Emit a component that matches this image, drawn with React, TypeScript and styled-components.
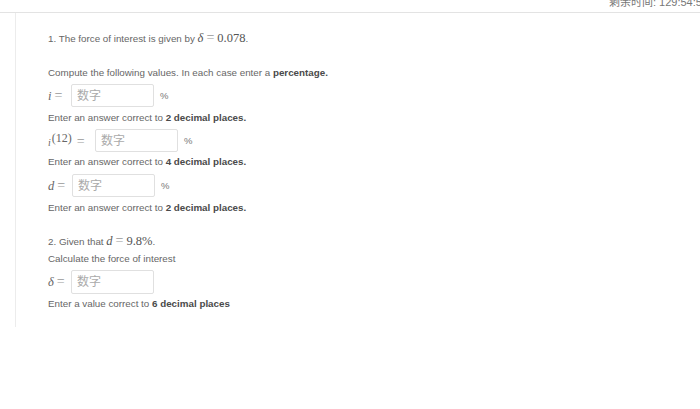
import React from "react";
import styled, { createGlobalStyle } from "styled-components";

const Global = createGlobalStyle`
  html, body { margin: 0; padding: 0; background: #fff; }
  body { font-family: "Liberation Sans", Arial, sans-serif; color: #666; }
`;

const Header = styled.div`
  height: 12px;
  border-bottom: 1px solid #e3e3e3;
  display: flex;
  justify-content: flex-end;
  overflow: hidden;
`;

const Timer = styled.div`
  font-size: 11px;
  line-height: 12px;
  margin-top: -4px;
  margin-right: -8px;
  color: #777;
  white-space: nowrap;
  font-family: "Liberation Sans", "Noto Sans CJK SC", sans-serif;
`;

const Body = styled.div`
  margin-left: 15px;
  border-left: 1px solid #ececec;
  padding: 18px 0 16px 32px;
  display: flex;
  flex-direction: column;
  align-items: flex-start;
`;

const Line = styled.div<{ $mt?: number }>`
  font-size: 9.8px;
  line-height: 14px;
  height: 14px;
  color: #666;
  white-space: nowrap;
  margin-top: ${(p) => p.$mt ?? 0}px;
  b { color: #4a4a4a; font-weight: bold; }
`;

const M = styled.span`
  font-family: "Liberation Serif", "Times New Roman", serif;
  font-size: 12.5px;
  color: #555;
`;

const V = styled.i`
  font-family: "Liberation Serif", "Times New Roman", serif;
  font-style: italic;
`;

const Eq = styled.span<{ $ml?: number }>`
  margin: 0 3px 0 ${(p) => p.$ml ?? 3}px;
  font-size: 14px;
  color: #999;
`;

const Row = styled.div<{ $mt?: number; $h?: number }>`
  display: flex;
  align-items: center;
  margin-top: ${(p) => p.$mt ?? 0}px;
  height: ${(p) => p.$h ?? 23}px;
`;

const Label = styled.span<{ $w: number }>`
  font-family: "Liberation Serif", "Times New Roman", serif;
  font-size: 12.5px;
  color: #666;
  width: ${(p) => p.$w}px;
  white-space: nowrap;
  sup { font-size: 12px; font-style: normal; vertical-align: 4px; margin-left: 1px; }
`;

const Small = styled.i`
  font-family: "Liberation Serif", "Times New Roman", serif;
  font-style: italic;
  font-size: 10px;
`;

const Input = styled.input<{ $h?: number }>`
  box-sizing: border-box;
  width: 83px;
  height: ${(p) => p.$h ?? 23}px;
  border: 1px solid #e0e0e0;
  border-radius: 2px;
  padding: 0 0 0 5px;
  font-size: 12px;
  font-family: "Liberation Sans", "Noto Sans CJK SC", sans-serif;
  color: #444;
  outline: none;
  &::placeholder { color: #aaa; }
`;

const Pct = styled.span`
  font-size: 9.5px;
  color: #777;
  margin-left: 6px;
`;

export default function App() {
  return (
    <>
      <Global />
      <Header>
        <Timer>剩余时间: 129:54:59</Timer>
      </Header>
      <Body>
        <Line>
          1. The force of interest is given by{" "}
          <M>
            <V>δ</V>
            <Eq>=</Eq>0.078
          </M>
          .
        </Line>
        <Line $mt={21}>
          Compute the following values. In each case enter a <b>percentage.</b>
        </Line>
        <Row $mt={4}>
          <Label $w={23}>
            <V>i</V>
            <Eq>=</Eq>
          </Label>
          <Input placeholder="数字" />
          <Pct>%</Pct>
        </Row>
        <Line $mt={4}>
          Enter an answer correct to <b>2 decimal places.</b>
        </Line>
        <Row $mt={4}>
          <Label $w={47}>
            <Small>i</Small>
            <sup>(12)</sup>
            <Eq $ml={5}>=</Eq>
          </Label>
          <Input placeholder="数字" />
          <Pct>%</Pct>
        </Row>
        <Line $mt={3}>
          Enter an answer correct to <b>4 decimal places.</b>
        </Line>
        <Row $mt={5}>
          <Label $w={24}>
            <V>d</V>
            <Eq>=</Eq>
          </Label>
          <Input placeholder="数字" />
          <Pct>%</Pct>
        </Row>
        <Line $mt={4}>
          Enter an answer correct to <b>2 decimal places.</b>
        </Line>
        <Line $mt={19}>
          2. Given that{" "}
          <M>
            <V>d</V>
            <Eq>=</Eq>9.8%
          </M>
          .
        </Line>
        <Line $mt={4}>Calculate the force of interest</Line>
        <Row $mt={4} $h={24}>
          <Label $w={23}>
            <V>δ</V>
            <Eq>=</Eq>
          </Label>
          <Input placeholder="数字" $h={24} />
        </Row>
        <Line $mt={3}>
          Enter a value correct to <b>6 decimal places</b>
        </Line>
      </Body>
    </>
  );
}
